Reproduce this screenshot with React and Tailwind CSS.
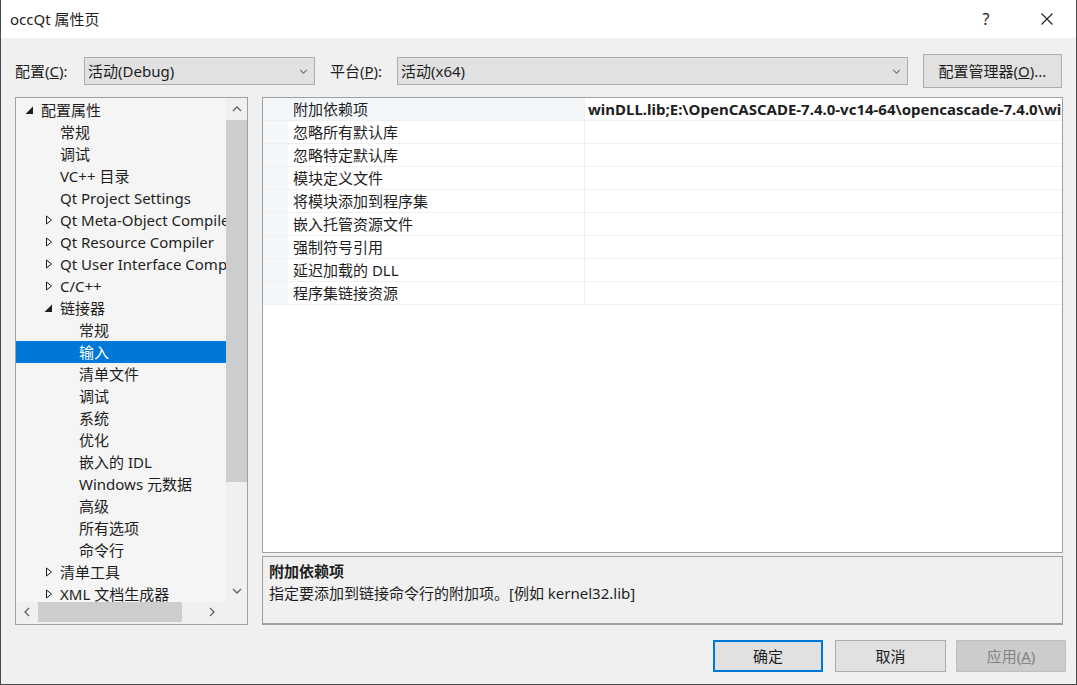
import React from 'react';

const FONT = { fontFamily: '"Noto Sans", "Noto Sans CJK SC", sans-serif' };

const treeItems = [
  { text: '配置属性', level: 0, node: 'open' },
  { text: '常规', level: 1 },
  { text: '调试', level: 1 },
  { text: 'VC++ 目录', level: 1 },
  { text: 'Qt Project Settings', level: 1 },
  { text: 'Qt Meta-Object Compiler', level: 1, node: 'closed' },
  { text: 'Qt Resource Compiler', level: 1, node: 'closed' },
  { text: 'Qt User Interface Compiler', level: 1, node: 'closed' },
  { text: 'C/C++', level: 1, node: 'closed' },
  { text: '链接器', level: 1, node: 'open' },
  { text: '常规', level: 2 },
  { text: '输入', level: 2, selected: true },
  { text: '清单文件', level: 2 },
  { text: '调试', level: 2 },
  { text: '系统', level: 2 },
  { text: '优化', level: 2 },
  { text: '嵌入的 IDL', level: 2 },
  { text: 'Windows 元数据', level: 2 },
  { text: '高级', level: 2 },
  { text: '所有选项', level: 2 },
  { text: '命令行', level: 2 },
  { text: '清单工具', level: 1, node: 'closed' },
  { text: 'XML 文档生成器', level: 1, node: 'closed' },
];

const indent = { 0: 'pl-[9px]', 1: 'pl-[28px]', 2: 'pl-[47px]' };

const props = [
  { name: '附加依赖项', value: 'winDLL.lib;E:\\OpenCASCADE-7.4.0-vc14-64\\opencascade-7.4.0\\win64\\vc14\\lib\\TKernel.lib;TKMath.lib', active: true },
  { name: '忽略所有默认库' },
  { name: '忽略特定默认库' },
  { name: '模块定义文件' },
  { name: '将模块添加到程序集' },
  { name: '嵌入托管资源文件' },
  { name: '强制符号引用' },
  { name: '延迟加载的 DLL' },
  { name: '程序集链接资源' },
];

const Chevron = ({ dir = 'down', className = '' }) => {
  const d = {
    down: 'M1 1 L5 5 L9 1',
    up: 'M1 5 L5 1 L9 5',
    left: 'M5 1 L1 5 L5 9',
    right: 'M1 1 L5 5 L1 9',
  }[dir];
  const side = dir === 'left' || dir === 'right';
  return (
    <svg width={side ? 6 : 10} height={side ? 10 : 6} viewBox={side ? '0 0 6 10' : '0 0 10 6'} className={className}>
      <path d={d} fill="none" stroke="currentColor" strokeWidth="1.3" />
    </svg>
  );
};

const Expander = ({ node }) => {
  if (node === 'open') {
    return (
      <svg width="8" height="8" viewBox="0 0 8 8">
        <path d="M8 0.5 L8 8 L0.5 8 Z" fill="#1e1e1e" />
      </svg>
    );
  }
  if (node === 'closed') {
    return (
      <svg width="8" height="10" viewBox="0 0 8 10" className="ml-[1px]">
        <path d="M1.5 1 L6.5 5 L1.5 9 Z" fill="none" stroke="#1e1e1e" strokeWidth="1" />
      </svg>
    );
  }
  return null;
};

const Combo = ({ text, className }) => (
  <div className={`h-[28px] bg-[#e1e1e1] border border-[#adadad] flex items-center pl-[3px] pr-[6px] ${className}`}>
    <span className="flex-1">{text}</span>
    <Chevron dir="down" className="text-[#707070] w-[9px] h-[5px]" />
  </div>
);

export default function App() {
  return (
    <div
      className="w-[1077px] h-[685px] bg-[#f0f0f0] flex flex-col text-[15px] text-[#1e1e1e] border-l border-r border-b border-[#4a4a4a] overflow-hidden"
      style={FONT}
    >
      {/* title bar */}
      <div className="h-[38px] bg-white flex items-center shrink-0">
        <span className="pl-[9px] flex-1">occQt 属性页</span>
        <span className="w-[20px] text-center text-[16px] mr-[45px]">?</span>
        <svg width="12" height="12" viewBox="0 0 12 12" className="mr-[23px]">
          <path d="M0.5 0.5 L11.5 11.5 M11.5 0.5 L0.5 11.5" stroke="#1e1e1e" strokeWidth="1.1" />
        </svg>
      </div>

      {/* configuration / platform row */}
      <div className="h-[34px] mt-[16px] flex items-center pl-[14px] shrink-0">
        <span className="w-[69px] whitespace-nowrap">配置(<span className="underline">C</span>):</span>
        <Combo text="活动(Debug)" className="w-[231px]" />
        <span className="ml-[15px] w-[67px] whitespace-nowrap">平台(<span className="underline">P</span>):</span>
        <Combo text="活动(x64)" className="w-[511px]" />
        <button className="ml-[15px] w-[139px] h-[34px] bg-[#e1e1e1] border border-[#adadad] whitespace-nowrap">
          配置管理器(<span className="underline">O</span>)...
        </button>
      </div>

      {/* tree + property grid */}
      <div className="flex mt-[9px] h-[528px] pl-[14px] shrink-0">
        <div className="w-[233px] h-full border border-[#a0a0a0] bg-[#f0f0f0] flex flex-col">
          <div className="flex flex-1 min-h-0">
            <div className="w-[210px] bg-[#f5f5f5] pt-[1px] overflow-hidden">
              {treeItems.map((item, i) => (
                <div
                  key={i}
                  className={`h-[22px] flex items-center whitespace-nowrap ${indent[item.level]} ${item.selected ? 'bg-[#0078d7] text-white' : ''}`}
                >
                  <span className="w-[16px] shrink-0 flex items-center">
                    <Expander node={item.node} />
                  </span>
                  <span>{item.text}</span>
                </div>
              ))}
            </div>
            <div className="flex-1 flex flex-col items-center">
              <div className="h-[22px] flex items-center text-[#606060]">
                <Chevron dir="up" />
              </div>
              <div className="w-full h-[362px] bg-[#cdcdcd]" />
              <div className="flex-1" />
              <div className="h-[22px] flex items-center text-[#606060]">
                <Chevron dir="down" />
              </div>
            </div>
          </div>
          <div className="h-[20px] mb-[2px] flex items-center shrink-0">
            <div className="w-[210px] flex items-center h-full bg-[#f0f0f0]">
              <span className="w-[22px] flex justify-center text-[#606060]">
                <Chevron dir="left" />
              </span>
              <div className="w-[144px] h-full bg-[#cdcdcd]" />
              <div className="flex-1" />
              <span className="w-[22px] flex justify-center text-[#606060] mr-[3px]">
                <Chevron dir="right" />
              </span>
            </div>
          </div>
        </div>

        <div className="ml-[14px] w-[801px] flex flex-col">
          <div className="h-[456px] border border-[#a0a0a0] bg-white">
            {props.map((p, i) => (
              <div key={i} className="h-[23px] flex border-b border-[#f0f0f0]">
                <div className="w-[25px] bg-[#f4f7fa] shrink-0" />
                <div
                  className={`w-[297px] shrink-0 pl-[5px] flex items-center border-r border-[#f0f0f0] ${p.active ? 'bg-[#f4f7fa]' : ''}`}
                >
                  {p.name}
                </div>
                <div className="flex-1 min-w-0 pl-[3px] flex items-center overflow-hidden whitespace-nowrap font-bold">
                  {p.value}
                </div>
              </div>
            ))}
          </div>
          <div className="mt-[3px] h-[69px] border border-b-2 border-[#a0a0a0] bg-[#f0f0f0] px-[6px] pt-[3px] leading-[22px]">
            <div className="font-bold">附加依赖项</div>
            <div>指定要添加到链接命令行的附加项。[例如 kernel32.lib]</div>
          </div>
        </div>
      </div>

      {/* dialog buttons */}
      <div className="flex justify-end items-center mt-[15px] pr-[10px] gap-[12px]">
        <button className="w-[110px] h-[32px] bg-[#e1e1e1] border-2 border-[#0078d7]">确定</button>
        <button className="w-[111px] h-[32px] bg-[#e1e1e1] border border-[#adadad]">取消</button>
        <button className="w-[110px] h-[32px] bg-[#cccccc] border border-[#bfbfbf] text-[#838383] -ml-[2px]">
          应用(<span className="underline">A</span>)
        </button>
      </div>
    </div>
  );
}
